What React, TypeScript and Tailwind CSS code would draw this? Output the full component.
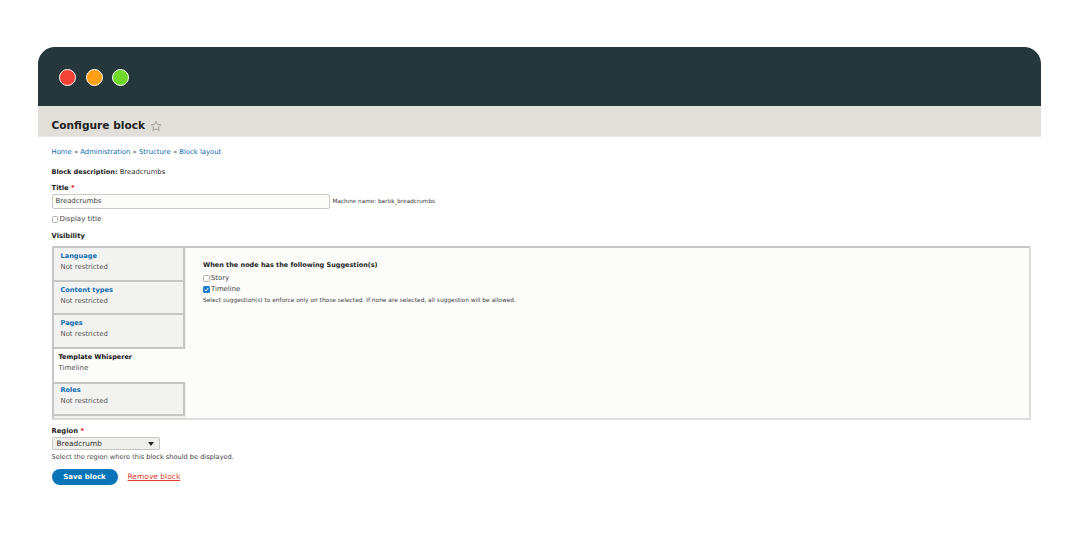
const font = { fontFamily: '"DejaVu Sans", sans-serif' };

function Tab({ title, sub, active, last }: { title: string; sub: string; active?: boolean; last?: boolean }) {
  if (active) {
    return (
      <div className="h-[33px] w-[132.5px] bg-[#fcfcfa] pl-[5px] pt-[3px]">
        <div className="text-[6.5px] leading-[11px] font-bold text-[#111]">{title}</div>
        <div className="text-[7px] leading-[11px] text-[#555]">{sub}</div>
      </div>
    );
  }
  return (
    <div className={`w-[131.5px] bg-[#f2f2f0] border-[#c6c6c4] border-r-2 border-b-2 pl-[7px] ${last ? "border-t-2 h-[34px] pt-[1px]" : "h-[33.5px] pt-[3px]"}`}>
      <div className="text-[6.6px] leading-[11px] font-bold text-[#0f6cb0]">{title}</div>
      <div className="text-[6.9px] leading-[11px] text-[#555]">{sub}</div>
    </div>
  );
}

export default function App() {
  return (
    <div style={font} className="h-[534px] w-[1080px] bg-white pt-[47px] pl-[38px] overflow-hidden">
      <div className="w-[1003px]">
        <div className="h-[59px] rounded-t-[17px] bg-[#26373b] flex items-center gap-[9.5px] pl-[21px] pt-[1px]">
          <span className="w-[17px] h-[17px] rounded-full bg-[#f44236] border-[1.5px] border-white"></span>
          <span className="w-[17px] h-[17px] rounded-full bg-[#ff9f13] border-[1.5px] border-white"></span>
          <span className="w-[17px] h-[17px] rounded-full bg-[#70d82a] border-[1.5px] border-white"></span>
        </div>
        <div className="h-[31px] bg-[#e0dfd9] border-b border-[#e9e8e4] flex items-center pl-[13.5px] gap-[5px] pt-[10px]">
          <span className="text-[10.6px] font-bold text-[#222]">Configure block</span>
          <svg width="12" height="12" viewBox="0 0 24 24" fill="none" stroke="#9a9a92" strokeWidth="1.8" strokeLinejoin="round">
            <path d="M12 2.5l2.9 6.3 6.8.8-5 4.7 1.3 6.8-6-3.4-6 3.4 1.3-6.8-5-4.7 6.8-.8z" />
          </svg>
        </div>
        <div className="pl-[13.5px] pr-[10px]">
          <div className="mt-[10px] h-[11px] text-[6.85px] leading-[11px] text-[#0f6cb0] whitespace-nowrap">
            Home <span className="text-[#555]">»</span> Administration <span className="text-[#555]">»</span> Structure <span className="text-[#555]">»</span> Block layout
          </div>
          <div className="mt-[9px] h-[11px] text-[6.85px] leading-[11px] text-[#333] whitespace-nowrap">
            <b className="text-[6.5px] text-[#222]">Block description:</b> Breadcrumbs
          </div>
          <div className="mt-[5px] h-[11px] text-[6.8px] leading-[11px] font-bold text-[#222]">
            Title <span className="text-[#e01010]">*</span>
          </div>
          <div className="flex items-center gap-[3px]">
            <div className="w-[278px] h-[15px] bg-[#fcfcfa] border border-[#c9c9c6] rounded-[2px] text-[6.9px] leading-[13px] pl-[3px] text-[#444]">
              Breadcrumbs
            </div>
            <span className="text-[5.7px] text-[#333] whitespace-nowrap">Machine name: bartik_breadcrumbs</span>
          </div>
          <div className="mt-[5px] flex items-center gap-[1.5px] h-[11px] text-[7px] text-[#444]">
            <span className="w-[6.5px] h-[6.5px] border border-[#b0b0b0] rounded-[1.5px] bg-white"></span>
            Display title
          </div>
          <div className="mt-[6px] h-[11px] text-[6.8px] leading-[11px] font-bold text-[#222]">Visibility</div>
          <div className="mt-[4px] w-[979px] h-[174px] flex border-2 border-[#dcdcda] border-l-[#c6c6c4] border-t-[#c6c6c4] rounded-[2px] bg-[#fcfcfa] overflow-hidden">
            <div className="w-[132.5px] shrink-0 bg-[#efefec]">
              <Tab title="Language" sub="Not restricted" />
              <Tab title="Content types" sub="Not restricted" />
              <Tab title="Pages" sub="Not restricted" />
              <Tab title="Template Whisperer" sub="Timeline" active />
              <Tab title="Roles" sub="Not restricted" last />
            </div>
            <div className="pl-[17px] pt-[12px]">
              <div className="h-[11px] text-[6.5px] leading-[11px] font-bold text-[#222]">When the node has the following Suggestion(s)</div>
              <div className="mt-[2px] h-[11px] flex items-center gap-[1.5px] text-[6.9px] text-[#444]">
                <span className="w-[6.5px] h-[6.5px] border border-[#b0b0b0] rounded-[1.5px] bg-white"></span>
                Story
              </div>
              <div className="h-[11px] flex items-center gap-[1.5px] text-[6.9px] text-[#444]">
                <span className="w-[6.5px] h-[6.5px] rounded-[1.5px] bg-[#1c7fd0] flex items-center justify-center">
                  <svg width="5" height="5" viewBox="0 0 10 10" fill="none" stroke="white" strokeWidth="2"><path d="M1.5 5.5l2.5 2.5 4.5-6" /></svg>
                </span>
                Timeline
              </div>
              <div className="text-[5.87px] leading-[10px] text-[#444] whitespace-nowrap">
                Select suggestion(s) to enforce only on those selected. If none are selected, all suggestion will be allowed.
              </div>
            </div>
          </div>
          <div className="mt-[6px] h-[11px] text-[6.8px] leading-[11px] font-bold text-[#222]">
            Region <span className="text-[#e01010]">*</span>
          </div>
          <div className="w-[108px] h-[13px] bg-[#efefeb] border border-[#c4c4c0] rounded-[2px] flex items-center justify-between pl-[4px] pr-[5px] text-[7.4px] text-[#333]">
            Breadcrumb
            <span className="w-0 h-0 border-l-[3px] border-r-[3px] border-t-[4px] border-l-transparent border-r-transparent border-t-[#222]"></span>
          </div>
          <div className="mt-[2px] h-[11px] text-[6.6px] leading-[11px] text-[#444] whitespace-nowrap">Select the region where this block should be displayed.</div>
          <div className="mt-[6px] flex items-center gap-[10px]">
            <span className="w-[66px] h-[16px] rounded-full bg-[#0a74b8] text-white font-bold text-[7px] flex items-center justify-center">Save block</span>
            <span className="text-[7.5px] text-[#e0402e] underline">Remove block</span>
          </div>
        </div>
      </div>
    </div>
  );
}
